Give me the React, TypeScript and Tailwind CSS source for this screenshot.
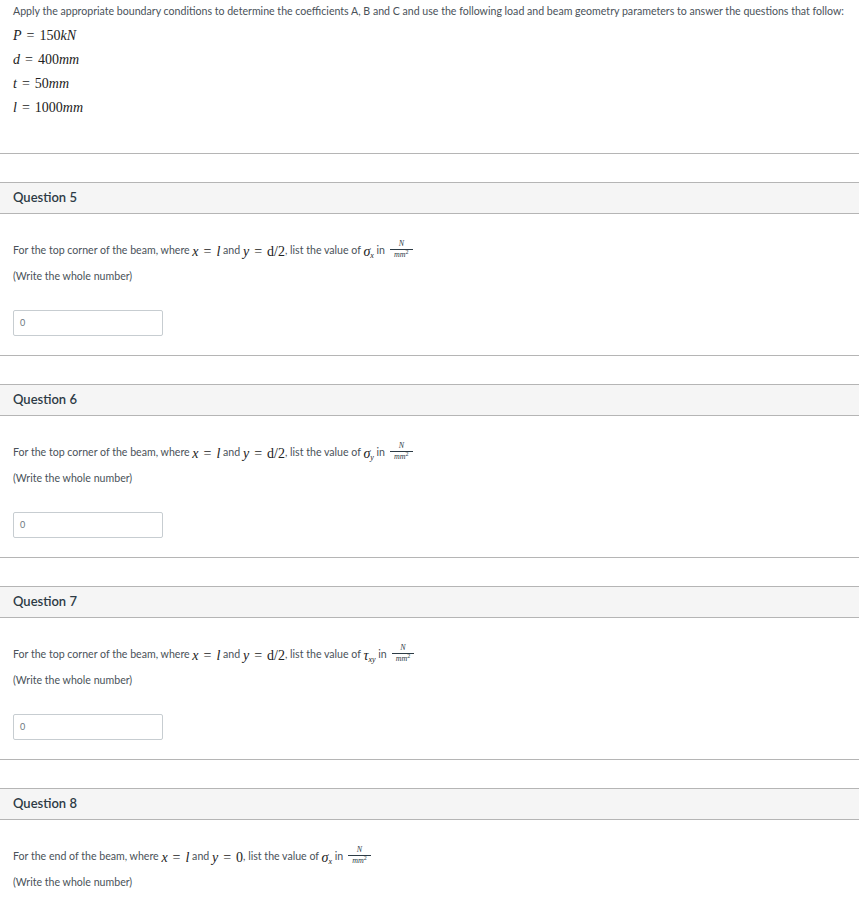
import React from "react";

const mathFont = "font-['Liberation_Serif','DejaVu_Serif',serif]";

// Italic variable in a math expression
function V({ children }: { children: React.ReactNode }) {
  return <span className={`${mathFont} italic`}>{children}</span>;
}

// Upright math text (numbers, operators)
function M({ children }: { children: React.ReactNode }) {
  return <span className={`${mathFont} not-italic`}>{children}</span>;
}

function Eq() {
  return <span className={`${mathFont} not-italic mx-[5px]`}>=</span>;
}

function Frac() {
  return (
    <span className={`${mathFont} inline-flex flex-col items-center ml-[5px] leading-none relative -top-[2px] text-[#2d3b45]`}>
      <span className="italic text-[8px] px-[2px] pb-[1px]">N</span>
      <span className="italic text-[8px] border-t border-[#2d3b45] px-[4px] pt-[1px]">
        mm<sup className="not-italic text-[6px]">2</sup>
      </span>
    </span>
  );
}

function Sym({ base, sub }: { base: string; sub: string }) {
  return (
    <span className={`${mathFont} italic text-[14px] text-[#222]`}>
      {base}
      <sub className="text-[8px]">{sub}</sub>
    </span>
  );
}

interface QuestionProps {
  num: number;
  location: string;
  yVal: React.ReactNode;
  sym: React.ReactNode;
}

function Question({ num, location, yVal, sym }: QuestionProps) {
  return (
    <div>
      <div className="border-t border-[#b5b5b5]" />
      <div className="mt-[28px] h-[32px] bg-[#f5f5f5] border-y border-[#b5b5b5] px-[13px] flex items-center">
        <span className="text-[13px] font-semibold text-[#2d3b45]">Question {num}</span>
      </div>
      <div className="px-[13px]">
        <div className="mt-[27px] h-[20px] flex items-center text-[10.6px] text-[#4a5259] whitespace-nowrap">
          <span>For the {location} of the beam, where&nbsp;</span>
          <span className="text-[14px] text-[#222] flex items-center">
            <V>x</V>
            <Eq />
            <V>l</V>
          </span>
          <span>&nbsp;and&nbsp;</span>
          <span className="text-[14px] text-[#222] flex items-center">
            <V>y</V>
            <Eq />
            {yVal}
          </span>
          <span>, list the value of&nbsp;</span>
          {sym}
          <span>&nbsp;in</span>
          <Frac />
        </div>
        <div className="mt-[6px] h-[20px] flex items-center text-[10.6px] text-[#4a5259]">
          (Write the whole number)
        </div>
        <div className="mt-[23px] w-[150px] h-[26px] border border-[#c7cdd1] rounded-[2px] flex items-center px-[6px]">
          <span className="text-[9px] text-[#6b7780]">0</span>
        </div>
      </div>
      <div className="h-[19px]" />
    </div>
  );
}

export default function App() {
  const params = [
    { v: "P", val: "150", unit: "kN" },
    { v: "d", val: "400", unit: "mm" },
    { v: "t", val: "50", unit: "mm" },
    { v: "l", val: "1000", unit: "mm" },
  ];

  return (
    <div className="min-h-screen bg-white font-['Lato','Open_Sans',sans-serif] text-[#4a5259]">
      <div className="px-[13px] pt-[1px]">
        <div className="h-[22px] flex items-center text-[10.6px] whitespace-nowrap">
          Apply the appropriate boundary conditions to determine the coefficients A, B and C and use the following load and beam geometry parameters to answer the questions that follow:
        </div>
        {params.map((p) => (
          <div key={p.v} className="h-[24px] flex items-center text-[14px] text-[#222]">
            <V>{p.v}</V>
            <Eq />
            <M>{p.val}</M>
            <V>{p.unit}</V>
          </div>
        ))}
      </div>
      <div className="h-[34px]" />

      <Question
        num={5}
        location="top corner"
        yVal={<M>d/2</M>}
        sym={<Sym base="σ" sub="x" />}
      />
      <Question
        num={6}
        location="top corner"
        yVal={<M>d/2</M>}
        sym={<Sym base="σ" sub="y" />}
      />
      <Question
        num={7}
        location="top corner"
        yVal={<M>d/2</M>}
        sym={<Sym base="τ" sub="xy" />}
      />
      <Question
        num={8}
        location="end"
        yVal={<M>0</M>}
        sym={<Sym base="σ" sub="x" />}
      />
    </div>
  );
}
